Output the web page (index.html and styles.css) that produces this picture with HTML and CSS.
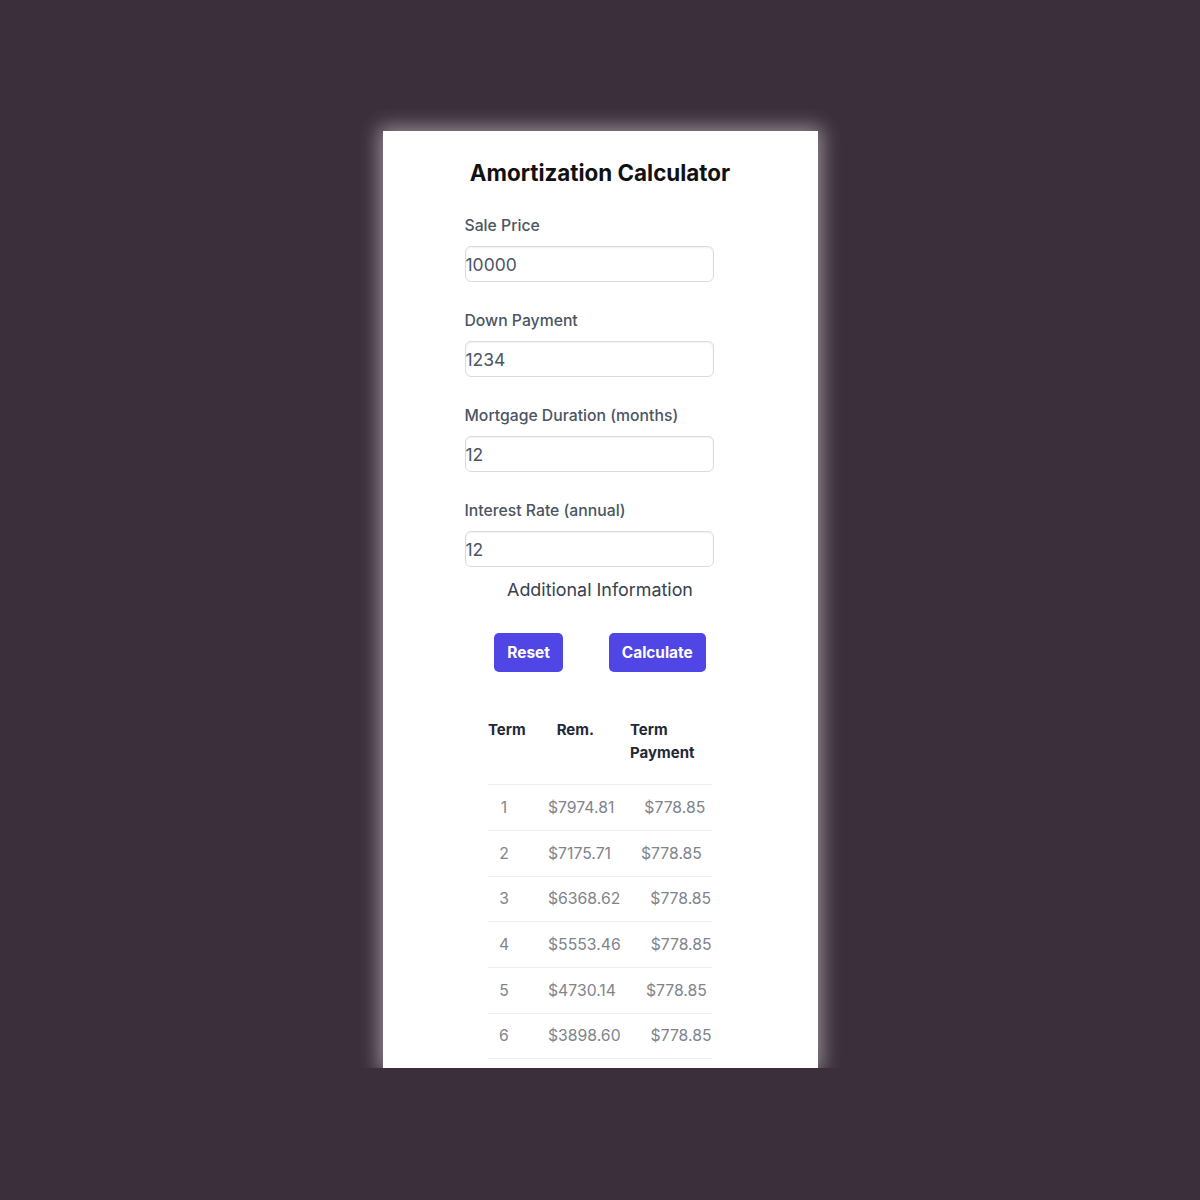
FILE: index.html
```html
<!DOCTYPE html>
<html>
<head>
  <title>Amortization Calculator</title>
  <link rel="stylesheet" href="styles.css">
</head>
<body>
  <div id="calculator">
    <h1 class="title">Amortization Calculator</h1>
    <div class="form">
      <div class="field">
        <label for="salePrice">Sale Price</label>
        <input type="text" id="salePrice" value="10000">
      </div>
      <div class="field">
        <label for="downPayment">Down Payment</label>
        <input type="text" id="downPayment" value="1234">
      </div>
      <div class="field">
        <label for="duration">Mortgage Duration (months)</label>
        <input type="text" id="duration" value="12">
      </div>
      <div class="field last">
        <label for="rate">Interest Rate (annual)</label>
        <input type="text" id="rate" value="12">
      </div>
    </div>
    <p class="info">Additional Information</p>
    <div class="buttons">
      <button class="btn">Reset</button>
      <button class="btn">Calculate</button>
    </div>
    <div class="schedule">
      <div class="head">
        <span class="h-term">Term</span>
        <span class="h-rem">Rem.</span>
        <span class="h-pay">Term Payment</span>
      </div>
      <div class="row"><span class="c-term">1</span><span class="c-rem">$7974.81</span><span class="c-pay">$778.85</span></div>
      <div class="row"><span class="c-term">2</span><span class="c-rem">$7175.71</span><span class="c-pay">$778.85</span></div>
      <div class="row"><span class="c-term">3</span><span class="c-rem">$6368.62</span><span class="c-pay">$778.85</span></div>
      <div class="row"><span class="c-term">4</span><span class="c-rem">$5553.46</span><span class="c-pay">$778.85</span></div>
      <div class="row"><span class="c-term">5</span><span class="c-rem">$4730.14</span><span class="c-pay">$778.85</span></div>
      <div class="row"><span class="c-term">6</span><span class="c-rem">$3898.60</span><span class="c-pay">$778.85</span></div>
    </div>
  </div>
</body>
</html>
```

FILE: styles.css
```css
body {
  margin: 0;
  padding-top: 131px;
  background-color: #3c2f3c;
  font-family: Inter, "Noto Sans", sans-serif;
}
#calculator {
  width: 435px;
  margin: 0 auto;
  padding: 27px 0 9px;
  box-sizing: border-box;
  background-color: #fff;
  box-shadow: 0 0 18px 4px rgba(255, 255, 255, 0.45);
}
.title {
  margin: 0 0 28px;
  font-size: 22.4px;
  line-height: 29px;
  font-weight: 700;
  color: #111;
  text-align: center;
}
.form {
  padding-left: 82px;
}
.field {
  display: flex;
  flex-direction: column;
  margin-bottom: 28px;
}
.field.last {
  margin-bottom: 11px;
}
.field label {
  font-size: 15.75px;
  line-height: 20px;
  font-weight: 500;
  color: #4b5563;
  margin: 1px 0 10px;
}
.field input {
  width: 249px;
  height: 36px;
  box-sizing: border-box;
  padding: 0;
  border: 1px solid #d9dbe0;
  border-radius: 6px;
  box-shadow: inset 0 1px 2px rgba(0, 0, 0, 0.06);
  font-family: Inter, sans-serif;
  font-size: 17.5px;
  color: #4b5563;
  outline: none;
}
.info {
  margin: 0;
  text-align: center;
  font-size: 17.9px;
  line-height: 24px;
  color: #374151;
}
.buttons {
  display: flex;
  justify-content: center;
  gap: 46px;
  margin-top: 31px;
}
.btn {
  height: 39px;
  padding: 0 13px;
  border: none;
  border-radius: 5px;
  background-color: #4f46e5;
  color: #fff;
  font-family: Inter, sans-serif;
  font-size: 15.4px;
  font-weight: 700;
  cursor: pointer;
}
.schedule {
  width: 224px;
  margin: 34px auto 0;
}
.head {
  display: flex;
  align-items: flex-start;
  padding: 12px 0 20px;
  font-size: 15px;
  line-height: 23px;
  font-weight: 700;
  color: #1f2937;
}
.h-rem {
  margin-left: 31px;
}
.h-pay {
  width: 82px;
  margin-left: 36px;
}
.row {
  display: flex;
  align-items: center;
  height: 45.8px;
  box-sizing: border-box;
  border-top: 1px solid #eceef1;
  font-size: 15.75px;
  color: #80848c;
}
.row:last-child {
  border-bottom: 1px solid #eceef1;
}
.c-term {
  width: 32px;
  text-align: center;
}
.c-rem {
  margin-left: 28px;
}
.c-pay {
  margin-left: 30px;
}
```
